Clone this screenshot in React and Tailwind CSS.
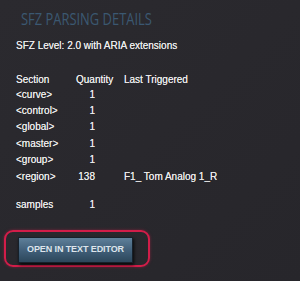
import React from "react";

const rows = [
  { name: "<curve>", qty: "1", last: "" },
  { name: "<control>", qty: "1", last: "" },
  { name: "<global>", qty: "1", last: "" },
  { name: "<master>", qty: "1", last: "" },
  { name: "<group>", qty: "1", last: "" },
  { name: "<region>", qty: "138", last: "F1_ Tom Analog 1_R" },
];

const Row = ({ name, qty, last }) => (
  <div className="flex h-[16.4px] items-center">
    <div className="w-[60px]">{name}</div>
    <div className="w-[48px]">
      <span className="block w-[19px] text-right">{qty}</span>
    </div>
    <div>{last}</div>
  </div>
);

const App = () => {
  return (
    <div
      className="w-[300px] h-[281px] overflow-hidden bg-linear-to-br from-[#2b2a2f] to-[#27262b] text-[#ececec] text-[10px] [text-shadow:0_0_0.4px_rgba(236,236,236,0.9)]"
      style={{ fontFamily: '"Liberation Sans", Arial, sans-serif' }}
    >
      {/* Header */}
      <div className="pt-[9px] pl-[21px]">
        <div
          className="h-[20px] leading-[20px] text-[17px] text-[#3b5871] origin-left scale-x-[0.76] whitespace-nowrap [text-shadow:none]"
          style={{ fontFamily: '"Open Sans", sans-serif' }}
        >
          SFZ PARSING DETAILS
        </div>
      </div>

      <div className="pl-[16px] mt-[10px] leading-[14px]">
        SFZ Level: 2.0 with ARIA extensions
      </div>

      {/* Table */}
      <div className="pl-[16px] mt-[20px]">
        <div className="flex h-[13px] items-center">
          <div className="w-[60px]">Section</div>
          <div className="w-[48px]">Quantity</div>
          <div>Last Triggered</div>
        </div>
        {rows.map((row, index) => (
          <Row key={index} {...row} />
        ))}
        <div className="mt-[12px]">
          <Row name="samples" qty="1" last="" />
        </div>
      </div>

      {/* Button */}
      <div className="ml-[4px] mt-[17px] w-[146px] h-[37px] border-2 border-[#d21d49] rounded-[9px] pl-[12px] pt-[5px] shadow-[0_0_3px_rgba(210,29,73,0.5)]">
        <button className="w-[115px] h-[26px] bg-linear-to-b from-[#5e809a] via-[#42607a] to-[#2c475b] border border-[#16202a] shadow-[1px_2px_3px_rgba(0,0,0,0.8)] text-[9px] font-bold text-[#dde5ec] tracking-[-0.1px] flex items-center justify-center [text-shadow:none]">
          OPEN IN TEXT EDITOR
        </button>
      </div>
    </div>
  );
};

export default App;
